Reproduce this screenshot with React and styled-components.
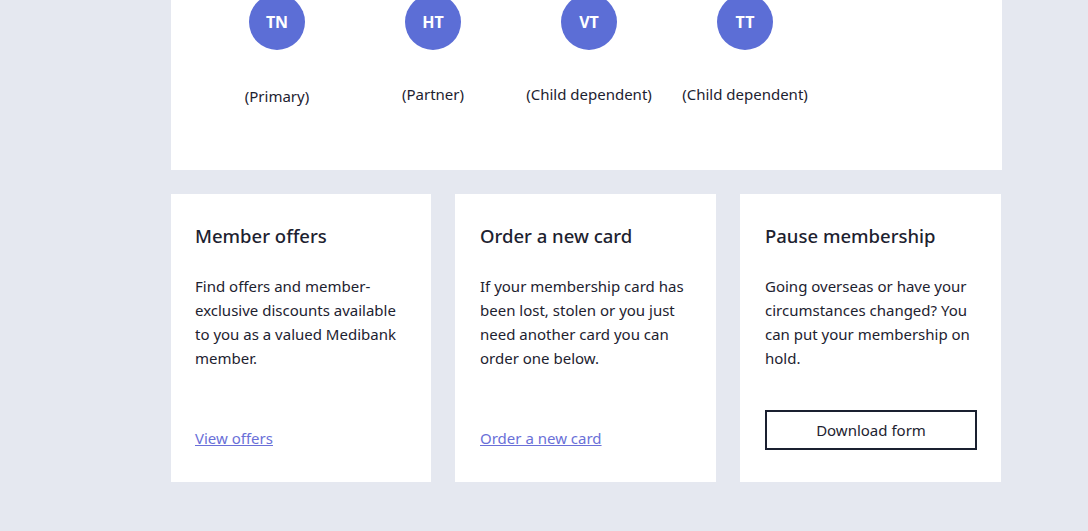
import React from 'react'
import styled, { createGlobalStyle } from 'styled-components'

const Global = createGlobalStyle`
  html, body {
    margin: 0;
    background: #e5e8f0;
    font-family: 'Noto Sans', 'Open Sans', sans-serif;
    color: #1d2230;
  }
`;

const members = [
  { initials: 'TN', role: '(Primary)', drop: 2 },
  { initials: 'HT', role: '(Partner)' },
  { initials: 'VT', role: '(Child dependent)' },
  { initials: 'TT', role: '(Child dependent)' },
];

export default function App() {
  return (
    <Page>
      <Global />
      <Main>
        <Family>
          {members.map((m, i) => (
            <Member key={i}>
              <Avatar>{m.initials}</Avatar>
              <Role $drop={m.drop}>{m.role}</Role>
            </Member>
          ))}
        </Family>
        <Cards>
          <Card>
            <Title>Member offers</Title>
            <Text>Find offers and member-exclusive discounts available to you as a valued Medibank member.</Text>
            <LinkAction href="#">View offers</LinkAction>
          </Card>
          <Card>
            <Title>Order a new card</Title>
            <Text>If your membership card has been lost, stolen or you just need another card you can order one below.</Text>
            <LinkAction href="#">Order a new card</LinkAction>
          </Card>
          <Card>
            <Title>Pause membership</Title>
            <Text>Going overseas or have your circumstances changed? You can put your membership on hold.</Text>
            <Button>Download form</Button>
          </Card>
        </Cards>
      </Main>
    </Page>
  )
}

const Page = styled.div`
  min-height: 531px;
  overflow: hidden;
`;

const Main = styled.div`
  width: 831px;
  margin-left: 171px;
  margin-top: -6px;
  display: flex;
  flex-direction: column;
  gap: 24px;
`;

const Family = styled.div`
  background: #fff;
  display: grid;
  grid-template-columns: repeat(4, 156px);
  padding: 0 0 62px 28px;
`;

const Member = styled.div`
  display: flex;
  flex-direction: column;
  align-items: center;
`;

const Avatar = styled.div`
  width: 56px;
  height: 56px;
  border-radius: 50%;
  background: #5c6ed6;
  color: #fff;
  font-weight: 700;
  font-size: 16px;
  display: flex;
  align-items: center;
  justify-content: center;
`;

const Role = styled.div`
  margin-top: ${p => 32 + (p.$drop || 0)}px;
  font-size: 15px;
  line-height: 24px;
  white-space: nowrap;
`;

const Cards = styled.div`
  display: grid;
  grid-template-columns: 260px 261px 261px;
  gap: 24px;
`;

const Card = styled.div`
  background: #fff;
  padding: 28px 24px 32px 25px;
  display: flex;
  flex-direction: column;
  height: 288px;
  box-sizing: border-box;

  &:first-child {
    padding-left: 24px;
  }
`;

const Title = styled.h3`
  margin: 0 0 24px;
  font-size: 18.5px;
  font-weight: 500;
  line-height: 28px;
`;

const Text = styled.p`
  margin: 0;
  flex: 1;
  font-size: 15px;
  line-height: 24px;
`;

const LinkAction = styled.a`
  font-size: 15px;
  line-height: 24px;
  color: #6a70d8;
  text-decoration: underline;
  align-self: flex-start;
`;

const Button = styled.button`
  height: 40px;
  width: 100%;
  background: #fff;
  border: 2px solid #1a2030;
  font-family: inherit;
  font-size: 15px;
  color: #1d2230;
  cursor: pointer;
`;
